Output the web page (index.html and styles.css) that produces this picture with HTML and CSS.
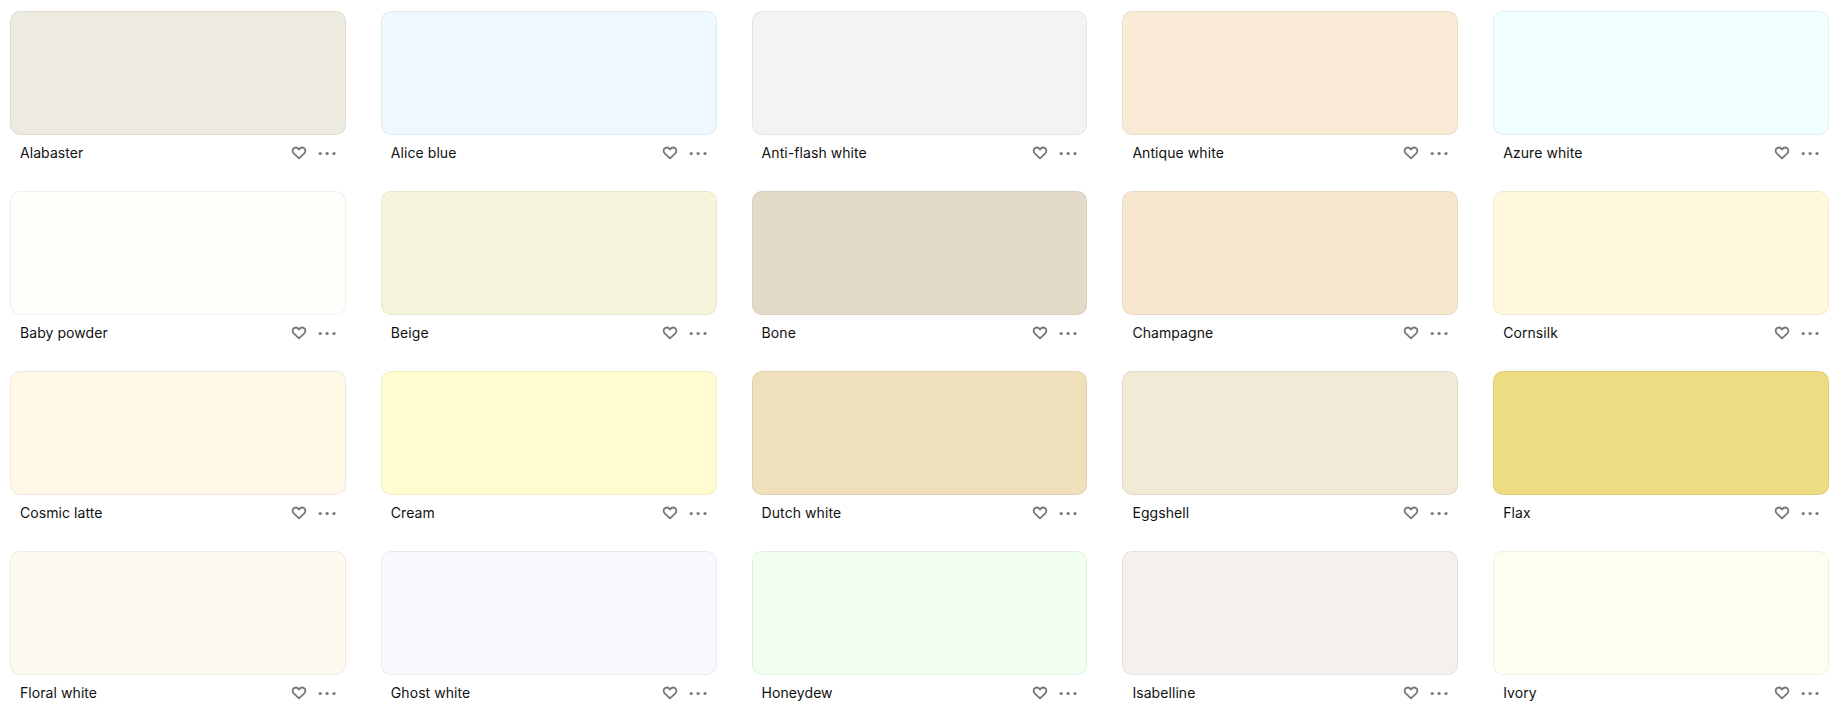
FILE: index.html
```html
<!DOCTYPE html>
<html lang="en">
<head>
  <meta charset="UTF-8">
  <meta name="viewport" content="width=device-width, initial-scale=1.0">
  <title>White Colors</title>
  <link rel="stylesheet" href="styles.css">
</head>
<body>
  <div class="colors-grid" id="colors"></div>

  <template id="card-template">
    <div class="color-card">
      <div class="color-swatch"></div>
      <div class="color-info">
        <span class="color-name"></span>
        <button class="icon-btn" aria-label="Save color">
          <svg width="16" height="16" viewBox="0 0 16 16" fill="none" stroke="currentColor" stroke-width="1.8" stroke-linejoin="round">
            <path d="M8 13.3 L2.7 8.3 C1.2 6.8 1.3 4.4 2.8 3.3 C4.4 2.2 6.6 2.5 8 4.5 C9.4 2.5 11.6 2.2 13.2 3.3 C14.7 4.4 14.8 6.8 13.3 8.3 Z"/>
          </svg>
        </button>
        <button class="icon-btn" aria-label="More options">
          <svg width="20" height="16" viewBox="0 0 20 16" fill="currentColor">
            <circle cx="3.2" cy="8.5" r="1.6"/>
            <circle cx="10.1" cy="8.5" r="1.6"/>
            <circle cx="17" cy="8.5" r="1.6"/>
          </svg>
        </button>
      </div>
    </div>
  </template>

  <script>
    const colors = [
      ['Alabaster', '#edeae0'],
      ['Alice blue', '#f0f8ff'],
      ['Anti-flash white', '#f2f3f4'],
      ['Antique white', '#faebd7'],
      ['Azure white', '#f0ffff'],
      ['Baby powder', '#fefefa'],
      ['Beige', '#f5f5dc'],
      ['Bone', '#e3dac9'],
      ['Champagne', '#f7e7ce'],
      ['Cornsilk', '#fff8dc'],
      ['Cosmic latte', '#fff8e7'],
      ['Cream', '#fffdd0'],
      ['Dutch white', '#efdfbb'],
      ['Eggshell', '#f0ead6'],
      ['Flax', '#eedc82'],
      ['Floral white', '#fffaf0'],
      ['Ghost white', '#f8f8ff'],
      ['Honeydew', '#f0fff0'],
      ['Isabelline', '#f4f0ec'],
      ['Ivory', '#fffff0']
    ];

    const grid = document.getElementById('colors');
    const template = document.getElementById('card-template');

    colors.forEach(([name, hex]) => {
      const card = template.content.cloneNode(true);
      card.querySelector('.color-swatch').style.backgroundColor = hex;
      card.querySelector('.color-name').textContent = name;
      grid.appendChild(card);
    });
  </script>
</body>
</html>
```

FILE: styles.css
```css
* {
  margin: 0;
  padding: 0;
  box-sizing: border-box;
}

body {
  font-family: Inter, 'Liberation Sans', sans-serif;
  background-color: #fff;
  color: #111;
  overflow: hidden;
}

.colors-grid {
  display: grid;
  grid-template-columns: repeat(5, 1fr);
  gap: 20px 35px;
  padding: 11px 10px 0;
}

.color-card {
  height: 160px;
}

.color-swatch {
  height: 124px;
  border-radius: 10px;
  box-shadow: inset 0 0 0 1px rgba(0, 0, 0, 0.06);
}

.color-info {
  display: flex;
  align-items: center;
  height: 36px;
  padding: 0 9px 0 10px;
}

.color-name {
  flex: 1;
  font-size: 14px;
  line-height: 20px;
  letter-spacing: 0.07px;
}

.icon-btn {
  display: flex;
  border: none;
  background: none;
  color: #777;
  cursor: pointer;
}

.icon-btn + .icon-btn {
  margin-left: 10px;
}
```
